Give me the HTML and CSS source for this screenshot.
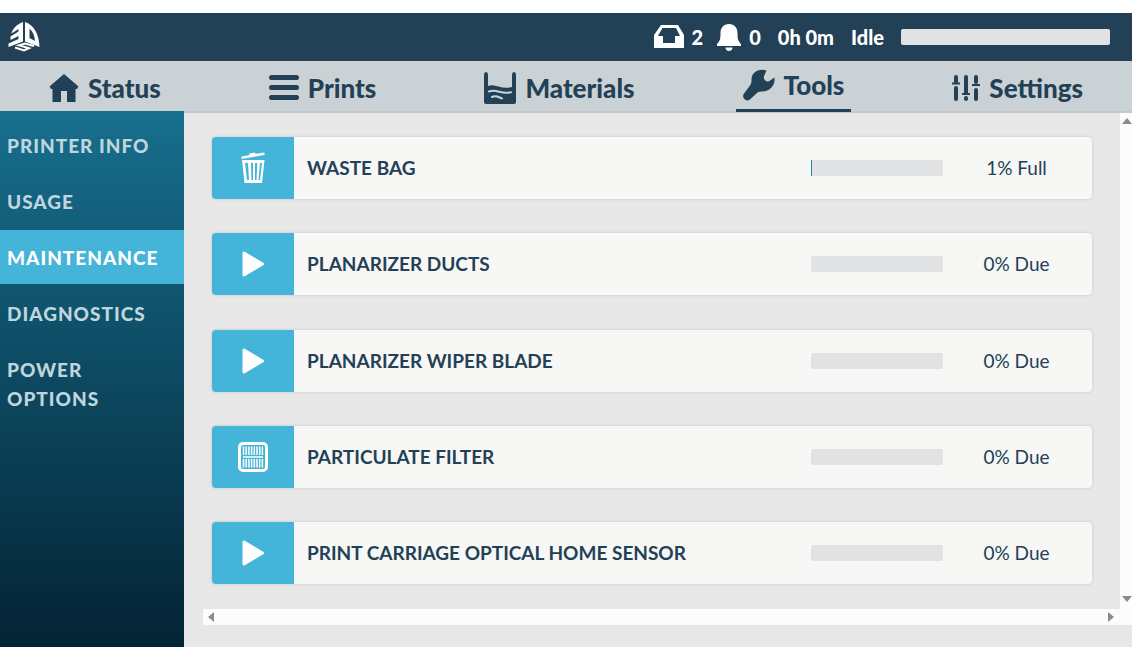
FILE: index.html
```html
<!DOCTYPE html>
<html lang="en">
<head>
    <meta charset="UTF-8">
    <meta name="viewport" content="width=device-width, initial-scale=1.0">
    <title>Maintenance</title>
    <link rel="stylesheet" href="styles.css">
</head>
<body>
    <header class="topbar">
        <svg class="logo" viewBox="0 0 32 30">
            <path d="M15 0v19.500L.5 25v-3.500l10-4.500v-3l-8 4v-3.500l8-5V7l-7 4.500C4.500 7 8.500 2.500 15 0z"/>
            <path fill-rule="evenodd" d="M17 0c8.500 3 14 11 14.500 25L17 19.500zM21.500 6.500v9.500l5.500 3c-.5-6-2.500-10-5.500-12.500z"/>
            <path class="base" d="M26 24l-9-2.500-6 1.700 10 3-5 2.300-9-3"/>
        </svg>
        <div class="status">
            <svg class="tray" viewBox="0 0 30 24">
                <path fill-rule="evenodd" d="M7 0h17l6 10v13H0V10zM8.500 3L4 11h5v7h12v-7h5L22 3z"/>
            </svg>
            <span>2</span>
            <svg class="bell" viewBox="0 0 24 27">
                <path d="M12 0c5.500 0 8.500 4 8.500 9 0 6 .5 8 3.500 11v2H0v-2c3-3 3.500-5 3.500-11C3.500 4 6.500 0 12 0zM8.500 23.500h7c0 2-1.500 3.500-3.500 3.500s-3.500-1.500-3.500-3.500z"/>
            </svg>
            <span>0</span>
            <span class="time">0h 0m</span>
            <span class="state">Idle</span>
            <div class="job-bar"></div>
        </div>
    </header>

    <nav class="tabs">
        <a class="tab" href="#">
            <svg class="icon-home" viewBox="0 0 30 28"><path d="M15 0l14.500 12.500-1.500 2.500h-1.500v13H18V17h-6v11H3.500V15H2L.5 12.500z"/></svg>
            Status
        </a>
        <a class="tab" href="#">
            <svg class="icon-menu" viewBox="0 0 30 25"><path d="M2.500 2.500h25M2.500 12.500h25M2.500 22.500h25"/></svg>
            Prints
        </a>
        <a class="tab" href="#">
            <svg class="icon-tank" viewBox="0 0 32 32">
                <path d="M0 2.500Q0 0 2 0t2 2.500V14c7-3 13 4 24 1V2.500Q28 0 30 0t2 2.500V30q0 2-2 2H2q-2 0-2-2z"/>
                <path class="wave" d="M5 19.500c8-3 12 3.500 22 .8M8 25c4-2 6 0 10 1.500"/>
            </svg>
            Materials
        </a>
        <a class="tab active" href="#">
            <svg class="icon-wrench" viewBox="0 0 32 32"><path d="M23.500 1.500C16-1 8.500 3 8.500 10.500c0 2.500 0 4-1.500 6L1 24.500c-3 4 2 9 6 6l7.500-7c1.500-1 3-1 5-1 7 0 13-6 12-14l-5.500 3.800c-3 1-6-2-5-5z"/></svg>
            Tools
        </a>
        <a class="tab" href="#">
            <svg class="icon-sliders" viewBox="0 0 28 26">
                <path d="M4 2v5M4 13v11M14 2v16M14 23v1M24 2v5M24 15v9"/>
                <path class="knob" d="M0 8.500h8M10 19h8M20 10h8"/>
            </svg>
            Settings
        </a>
    </nav>

    <div class="page">
        <aside class="sidebar">
            <a href="#">Printer Info</a>
            <a href="#">Usage</a>
            <a class="active" href="#">Maintenance</a>
            <a href="#">Diagnostics</a>
            <a href="#">Power Options</a>
        </aside>

        <main class="panel">
            <div class="items">
                <div class="item">
                    <button class="item-btn" aria-label="Waste bag">
                        <svg class="icon-bin" viewBox="0 0 24 32">
                            <path d="M.5 4.500L8 3.200 8.500 1.500l5-1 1 1.300L23.500.5v2.500L.5 7z"/>
                            <path fill-rule="evenodd" d="M1 8h22.500l-2.500 23H3.500zM4 11l2 17h2L7 11zM10 11l.5 17h1.500V11zM14 11v17h1.500l.8-17zM19 11l-1.500 17h1.500l2-17z"/>
                        </svg>
                    </button>
                    <h2>Waste Bag</h2>
                    <div class="bar"><div class="fill" style="width: 1%"></div></div>
                    <span class="value">1% Full</span>
                </div>
                <div class="item">
                    <button class="item-btn" aria-label="Planarizer ducts">
                        <svg class="icon-play" viewBox="0 0 22 26"><path d="M2 2v22L20.500 13z"/></svg>
                    </button>
                    <h2>Planarizer Ducts</h2>
                    <div class="bar"></div>
                    <span class="value">0% Due</span>
                </div>
                <div class="item">
                    <button class="item-btn" aria-label="Planarizer wiper blade">
                        <svg class="icon-play" viewBox="0 0 22 26"><path d="M2 2v22L20.500 13z"/></svg>
                    </button>
                    <h2>Planarizer Wiper Blade</h2>
                    <div class="bar"></div>
                    <span class="value">0% Due</span>
                </div>
                <div class="item">
                    <button class="item-btn" aria-label="Particulate filter">
                        <svg class="icon-filter" viewBox="0 0 30 30">
                            <rect x="1.500" y="1.500" width="27" height="27" rx="3.500"/>
                            <path class="slats" d="M5 15h20M5.500 4.500v8.500M8.200 4.500v8.500M10.900 4.500v8.500M13.600 4.500v8.500M16.300 4.500v8.500M19 4.500v8.500M21.700 4.500v8.500M24.400 4.500v8.500M5.500 17v8.500M8.200 17v8.500M10.900 17v8.500M13.600 17v8.500M16.300 17v8.500M19 17v8.500M21.700 17v8.500M24.400 17v8.500"/>
                        </svg>
                    </button>
                    <h2>Particulate Filter</h2>
                    <div class="bar"></div>
                    <span class="value">0% Due</span>
                </div>
                <div class="item">
                    <button class="item-btn" aria-label="Print carriage optical home sensor">
                        <svg class="icon-play" viewBox="0 0 22 26"><path d="M2 2v22L20.500 13z"/></svg>
                    </button>
                    <h2>Print Carriage Optical Home Sensor</h2>
                    <div class="bar"></div>
                    <span class="value">0% Due</span>
                </div>
            </div>
            <div class="scroll-y">
                <svg viewBox="0 0 10 6"><path d="M5 0l5 6H0z"/></svg>
                <svg viewBox="0 0 10 6"><path d="M0 0h10L5 6z"/></svg>
            </div>
            <div class="scroll-x">
                <svg viewBox="0 0 6 10"><path d="M6 0v10L0 5z"/></svg>
                <svg viewBox="0 0 6 10"><path d="M0 0v10l6-5z"/></svg>
            </div>
        </main>
    </div>
</body>
</html>
```

FILE: styles.css
```css
:root {
    --navy: #234156;
    --blue: #44b4d9;
    --nav: #cbd2d5;
    --grey: #e7e7e7;
    --bar: #e1e2e4;
    --card: #f7f7f5;
}

* {
    margin: 0;
    padding: 0;
    box-sizing: border-box;
}

body {
    display: flex;
    flex-direction: column;
    height: 100vh;
    padding: 13px 0;
    background: #fff;
    color: var(--navy);
    font-family: Lato, "Open Sans", sans-serif;
}

a {
    color: inherit;
    text-decoration: none;
}

/* top bar */
.topbar {
    display: flex;
    align-items: center;
    justify-content: space-between;
    flex: none;
    height: 48px;
    padding: 0 22px 0 8px;
    background: var(--navy);
    color: #fff;
}

.topbar svg {
    fill: #fff;
}

.logo {
    width: 32px;
    height: 30px;
}

.topbar .base {
    fill: none;
    stroke: #fff;
    stroke-width: 2;
}

.status {
    display: flex;
    align-items: center;
    gap: 8px;
    font-size: 20px;
    font-weight: 900;
    line-height: 22px;
}

.tray {
    width: 30px;
    height: 24px;
}

.bell {
    width: 24px;
    height: 27px;
    margin-left: 6px;
}

.time,
.state,
.job-bar {
    margin-left: 9px;
}

.job-bar {
    width: 209px;
    height: 16px;
    border-radius: 2px;
    background: var(--bar);
}

/* main tabs */
.tabs {
    position: relative;
    display: flex;
    justify-content: space-between;
    flex: none;
    height: 50px;
    padding: 0 42px;
    background: var(--nav);
}

.tab {
    display: flex;
    align-items: center;
    gap: 9px;
    height: 51px;
    padding: 2px 7px 0;
    font-size: 26px;
    font-weight: 900;
}

.tab.active {
    padding-top: 0;
    border-bottom: 3px solid var(--navy);
}

.tab svg {
    fill: var(--navy);
}

.icon-home {
    width: 30px;
    height: 28px;
}

.tab .icon-menu {
    width: 30px;
    height: 25px;
    stroke: var(--navy);
    stroke-width: 5;
    stroke-linecap: round;
}

.icon-tank,
.icon-wrench {
    width: 32px;
    height: 32px;
}

.icon-tank .wave {
    fill: none;
    stroke: var(--nav);
    stroke-width: 2;
    stroke-linecap: round;
}

.icon-sliders {
    width: 28px;
    height: 26px;
    stroke: var(--navy);
    stroke-width: 4;
    stroke-linecap: round;
}

.icon-sliders .knob {
    stroke-width: 2;
    stroke-linecap: butt;
}

.page {
    display: flex;
    flex: 1;
    min-height: 0;
}

/* side menu */
.sidebar {
    flex: none;
    width: 184px;
    padding-top: 7px;
    background: linear-gradient(#176f8e, #032334);
}

.sidebar a {
    display: block;
    margin-bottom: 2px;
    padding: 13px 7px 12px;
    color: #bfd6de;
    font-size: 19px;
    font-weight: 900;
    line-height: 29px;
    letter-spacing: 1px;
    text-transform: uppercase;
}

.sidebar a.active {
    background: var(--blue);
    color: #fff;
}

/* maintenance list */
.panel {
    display: grid;
    grid-template-columns: 1fr 12px;
    grid-template-rows: 1fr 16px;
    flex: 1;
    padding: 0 0 22px 19px;
    background: var(--grey);
    border-top: 2px solid #c1c8cc;
}

.items {
    display: flex;
    flex-direction: column;
    justify-content: space-between;
    padding: 24px 28px 25px 9px;
}

.item {
    display: flex;
    align-items: center;
    height: 62px;
    background: var(--card);
    border-radius: 4px;
    box-shadow: 0 0 2px 1px #d2d6d8;
    overflow: hidden;
}

.item-btn {
    display: flex;
    align-items: center;
    justify-content: center;
    width: 82px;
    height: 100%;
    border: none;
    background: var(--blue);
    cursor: pointer;
}

.item-btn svg {
    fill: #fff;
}

.icon-bin {
    width: 24px;
    height: 32px;
}

.icon-play {
    width: 22px;
    height: 26px;
    stroke: #fff;
    stroke-width: 3;
    stroke-linejoin: round;
}

.item-btn .icon-filter {
    width: 30px;
    height: 30px;
    fill: none;
    stroke: #fff;
    stroke-width: 3;
}

.icon-filter .slats {
    stroke-width: 1.5;
}

.item h2 {
    flex: 1;
    padding-left: 13px;
    font-size: 19px;
    font-weight: 700;
    line-height: 22px;
    text-transform: uppercase;
}

.bar {
    width: 132px;
    height: 16px;
    border-radius: 2px;
    background: var(--bar);
}

.fill {
    height: 100%;
    background: #2488a6;
}

.value {
    width: 149px;
    padding-right: 2px;
    font-size: 19px;
    line-height: 22px;
    text-align: center;
}

/* scroll bars */
.scroll-y,
.scroll-x {
    display: flex;
    justify-content: space-between;
    background: #fcfcfc;
}

.scroll-y {
    flex-direction: column;
    align-items: flex-end;
    padding: 5px 0 7px;
}

.scroll-x {
    grid-column: 1 / 3;
    align-items: center;
    padding: 0 18px 0 5px;
}

.scroll-y svg {
    width: 10px;
    height: 6px;
    fill: #8b8b8b;
}

.scroll-x svg {
    width: 6px;
    height: 10px;
    fill: #8b8b8b;
}
```
